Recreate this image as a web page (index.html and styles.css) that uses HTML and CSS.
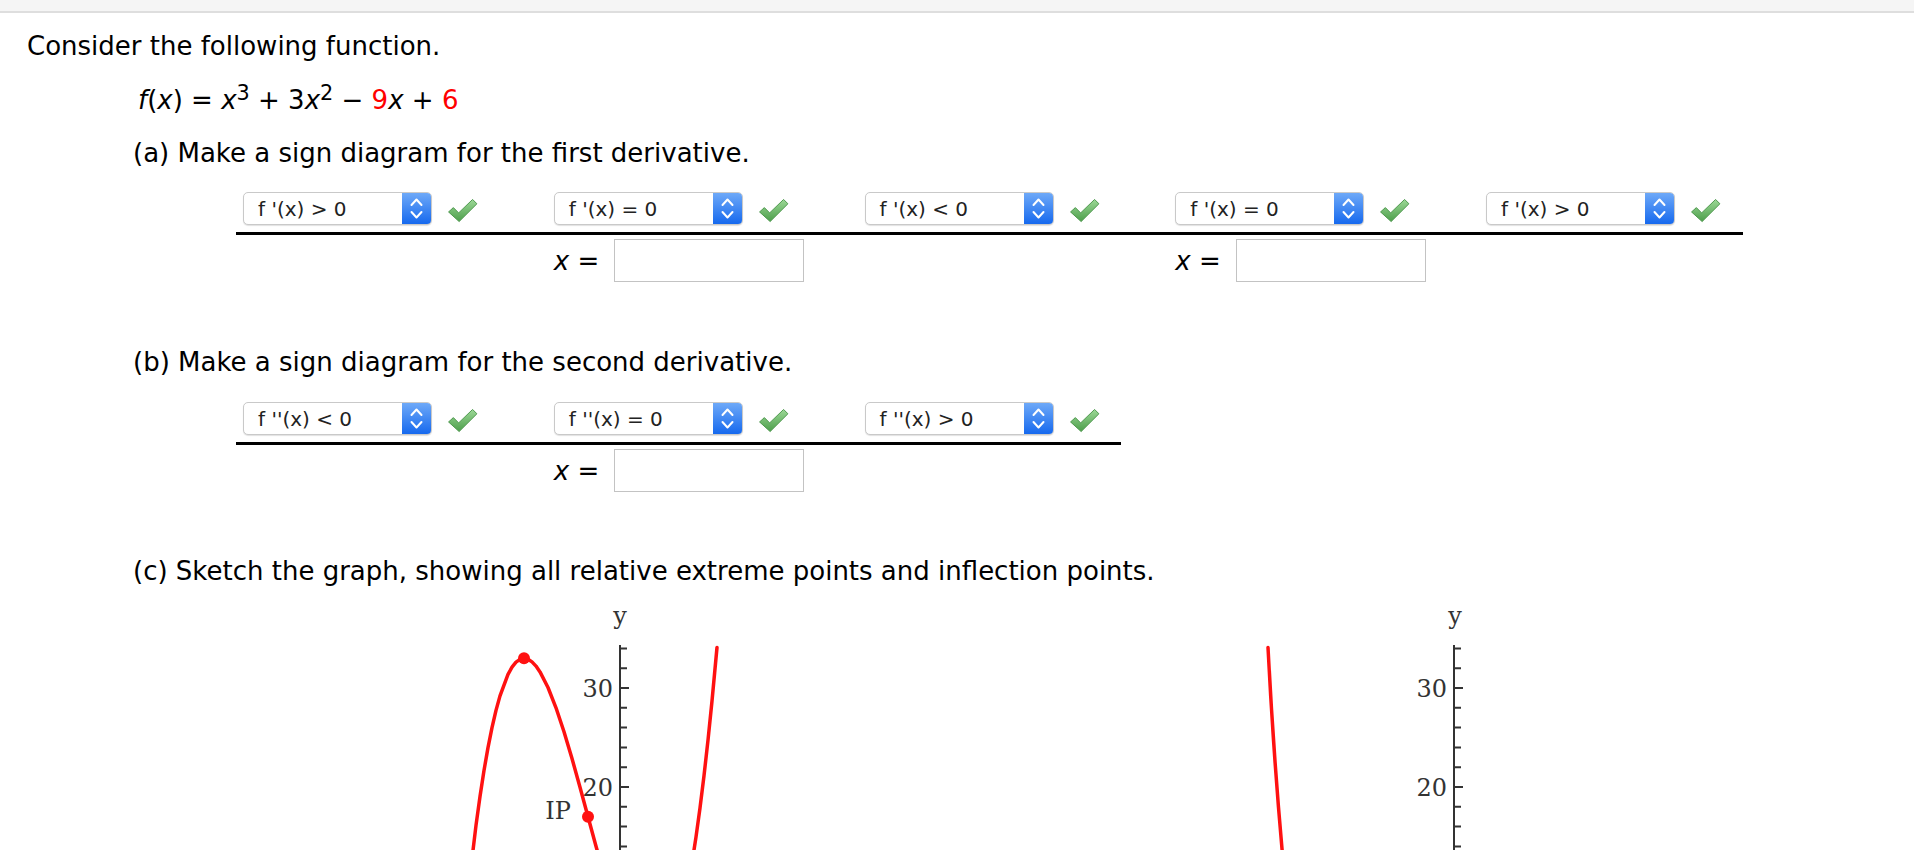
FILE: index.html
```html
<!DOCTYPE html>
<html lang="en">
<head>
    <meta charset="UTF-8">
    <title>Curve Sketching - Sign Diagrams</title>
    <link rel="stylesheet" href="styles.css">
</head>
<body>
    <!-- shared icons -->
    <svg class="defs" width="0" height="0">
        <defs>
            <linearGradient id="checkFill" x1="0" y1="0" x2="0" y2="1">
                <stop offset="0" stop-color="#9bd896"/>
                <stop offset="1" stop-color="#4d9e4b"/>
            </linearGradient>
        </defs>
        <symbol id="check" viewBox="0 0 32 26">
            <path d="M1.5 14.5 L6.5 10 L12 15.5 L26.5 1.5 L31 6 L12.5 24.5 Z" fill="url(#checkFill)" stroke="#4a964a" stroke-width="1" stroke-linejoin="round"/>
        </symbol>
        <symbol id="arrows" viewBox="0 0 29 31">
            <path d="M9.5 12 L14.5 6.5 L19.5 12 M9.5 19 L14.5 24.5 L19.5 19" fill="none" stroke="#fff" stroke-width="2" stroke-linecap="round" stroke-linejoin="round"/>
        </symbol>
    </svg>

    <div class="topbar"></div>

    <div class="content">
        <p>Consider the following function.</p>
        <p class="formula"><i>f</i>(<i>x</i>) = <i>x</i><sup>3</sup> + 3<i>x</i><sup>2</sup> &minus; <span class="red">9</span><i>x</i> + <span class="red">6</span></p>

        <p class="part">(a) Make a sign diagram for the first derivative.</p>
        <div class="chart">
            <div class="chart-row chart-top">
                <div class="cell">
                    <div class="select"><span class="select-text">f '(x) &gt; 0</span><span class="stepper"><svg><use href="#arrows"/></svg></span></div>
                    <svg class="check"><use href="#check"/></svg>
                </div>
                <div class="cell">
                    <div class="select"><span class="select-text">f '(x) = 0</span><span class="stepper"><svg><use href="#arrows"/></svg></span></div>
                    <svg class="check"><use href="#check"/></svg>
                </div>
                <div class="cell">
                    <div class="select"><span class="select-text">f '(x) &lt; 0</span><span class="stepper"><svg><use href="#arrows"/></svg></span></div>
                    <svg class="check"><use href="#check"/></svg>
                </div>
                <div class="cell">
                    <div class="select"><span class="select-text">f '(x) = 0</span><span class="stepper"><svg><use href="#arrows"/></svg></span></div>
                    <svg class="check"><use href="#check"/></svg>
                </div>
                <div class="cell">
                    <div class="select"><span class="select-text">f '(x) &gt; 0</span><span class="stepper"><svg><use href="#arrows"/></svg></span></div>
                    <svg class="check"><use href="#check"/></svg>
                </div>
            </div>
            <div class="chart-row chart-bottom">
                <div class="cell"></div>
                <div class="cell"><span class="x-label"><i>x</i> =</span><span class="answer-box"></span></div>
                <div class="cell"></div>
                <div class="cell"><span class="x-label"><i>x</i> =</span><span class="answer-box"></span></div>
                <div class="cell"></div>
            </div>
        </div>

        <p class="part part-b">(b) Make a sign diagram for the second derivative.</p>
        <div class="chart chart-second">
            <div class="chart-row chart-top">
                <div class="cell">
                    <div class="select"><span class="select-text">f ''(x) &lt; 0</span><span class="stepper"><svg><use href="#arrows"/></svg></span></div>
                    <svg class="check"><use href="#check"/></svg>
                </div>
                <div class="cell">
                    <div class="select"><span class="select-text">f ''(x) = 0</span><span class="stepper"><svg><use href="#arrows"/></svg></span></div>
                    <svg class="check"><use href="#check"/></svg>
                </div>
                <div class="cell">
                    <div class="select"><span class="select-text">f ''(x) &gt; 0</span><span class="stepper"><svg><use href="#arrows"/></svg></span></div>
                    <svg class="check"><use href="#check"/></svg>
                </div>
            </div>
            <div class="chart-row chart-bottom">
                <div class="cell"></div>
                <div class="cell"><span class="x-label"><i>x</i> =</span><span class="answer-box"></span></div>
                <div class="cell"></div>
            </div>
        </div>

        <p class="part part-c">(c) Sketch the graph, showing all relative extreme points and inflection points.</p>
        <div class="graphs">
            <!-- graph 1: the cubic, 32px per x unit, 9.9px per y unit -->
            <svg class="graph" width="500" height="255" viewBox="0 0 500 255">
                <text class="graph-label" x="320" y="29" text-anchor="middle">y</text>
                <line class="axis" x1="320" y1="50" x2="320" y2="260"/>
                <path class="axis" d="M320 53.4h7 M320 73.2h7 M320 93h9 M320 112.8h7 M320 132.6h7 M320 152.4h7 M320 172.2h7 M320 192h9 M320 211.8h7 M320 231.6h7 M320 251.4h7"/>
                <text class="graph-label" x="313" y="101.5" text-anchor="end">30</text>
                <text class="graph-label" x="313" y="200.5" text-anchor="end">20</text>
                <path class="curve" d="M169.6 283.6 L176 230.4 L180 201.4 L184 175.5 L188 152.6 L192 132.6 L196 115.4 L200 100.9 L208 79.4 L212 72.2 L216 67.2 L220 64.3 L224 63.3 L228 64.2 L232 66.9 L236 71.1 L240 76.9 L248 92.5 L256 112.8 L264 136.8 L272 163.5 L280 192.2 L288 221.7 L296 251.2 L304 279.9 L312 306.6 L320 330.6 L336 366.5 L352 380.1 L368 364 L384 310.8 L392 268 L396 242 L400 213 L404 180.8 L408 145.1 L412 106 L417 52.5"/>
                <circle class="dot" cx="224" cy="63.3" r="6"/>
                <circle class="dot" cx="288" cy="221.7" r="6"/>
                <text class="graph-label" x="271" y="223.5" text-anchor="end">IP</text>
            </svg>
            <svg class="graph" width="500" height="255" viewBox="0 0 500 255">
                <text class="graph-label" x="321" y="29" text-anchor="middle">y</text>
                <line class="axis" x1="320" y1="50" x2="320" y2="260"/>
                <path class="axis" d="M320 53.4h7 M320 73.2h7 M320 93h9 M320 112.8h7 M320 132.6h7 M320 152.4h7 M320 172.2h7 M320 192h9 M320 211.8h7 M320 231.6h7 M320 251.4h7"/>
                <text class="graph-label" x="313" y="101.5" text-anchor="end">30</text>
                <text class="graph-label" x="313" y="200.5" text-anchor="end">20</text>
                <path class="curve" d="M134 52.5 Q139.5 160 149 265"/>
            </svg>
        </div>
    </div>
</body>
</html>
```

FILE: styles.css
```css
* {
    box-sizing: border-box;
}

body {
    margin: 0;
    background-color: #fff;
    color: #000;
    font-family: "DejaVu Sans", Verdana, sans-serif;
    overflow: hidden;
}

.defs {
    position: absolute;
    width: 0;
    height: 0;
}

.topbar {
    height: 13px;
    background-color: #f5f5f5;
    border-bottom: 2px solid #dedede;
}

.content {
    padding: 17px 0 0 27px;
}

p {
    margin: 0;
    font-size: 26px;
    line-height: 32px;
}

.formula {
    margin: 22px 0 0 111px;
}

.formula sup {
    font-size: 0.8em;
    line-height: 0;
    vertical-align: 0.45em;
}

.red {
    color: #f00;
}

.part {
    margin: 21px 0 0 106px;
}

.part-b {
    margin-top: 64px;
}

.part-c {
    margin-top: 63px;
}

/* sign diagrams */
.chart {
    margin: 23px 0 0 209px;
    width: 1507px;
}

.chart-second {
    width: 885px;
    margin-top: 24px;
}

.chart-row {
    display: flex;
}

.chart-top {
    padding-bottom: 7px;
    border-bottom: 3px solid #000;
}

.chart-bottom {
    padding-top: 4px;
}

.cell {
    flex: none;
    width: 310.75px;
    padding-left: 7px;
    display: flex;
    align-items: center;
    gap: 15px;
}

.select {
    width: 189px;
    height: 33px;
    display: flex;
    align-items: center;
    background-color: #fff;
    border: 1px solid #c9c9c9;
    border-radius: 5px;
    box-shadow: 0 1px 1px rgba(0, 0, 0, 0.12);
    overflow: hidden;
}

.select-text {
    flex: 1;
    padding-left: 14px;
    font-size: 20px;
    color: #222;
    white-space: pre;
}

.stepper {
    width: 29px;
    align-self: stretch;
    background: linear-gradient(#6ea9f8, #1669ee);
}

.stepper svg {
    display: block;
    width: 29px;
    height: 31px;
}

.check {
    width: 31px;
    height: 25px;
    margin-top: 4px;
}

.x-label {
    font-size: 26px;
    line-height: 32px;
    white-space: pre;
}

.answer-box {
    width: 190px;
    height: 43px;
    border: 1px solid #c3c3c3;
    background-color: #fff;
}

/* graphs */
.graphs {
    display: flex;
    gap: 334px;
    margin: 8px 0 0 273px;
}

.graph {
    flex: none;
}

.graph-label {
    font-family: "DejaVu Serif", serif;
    font-size: 24px;
    fill: #333;
}

.axis {
    stroke: #333;
    stroke-width: 2;
    fill: none;
}

.curve {
    fill: none;
    stroke: #ff1111;
    stroke-width: 3.5;
    stroke-linejoin: round;
    stroke-linecap: round;
}

.dot {
    fill: #ff1111;
}
```
